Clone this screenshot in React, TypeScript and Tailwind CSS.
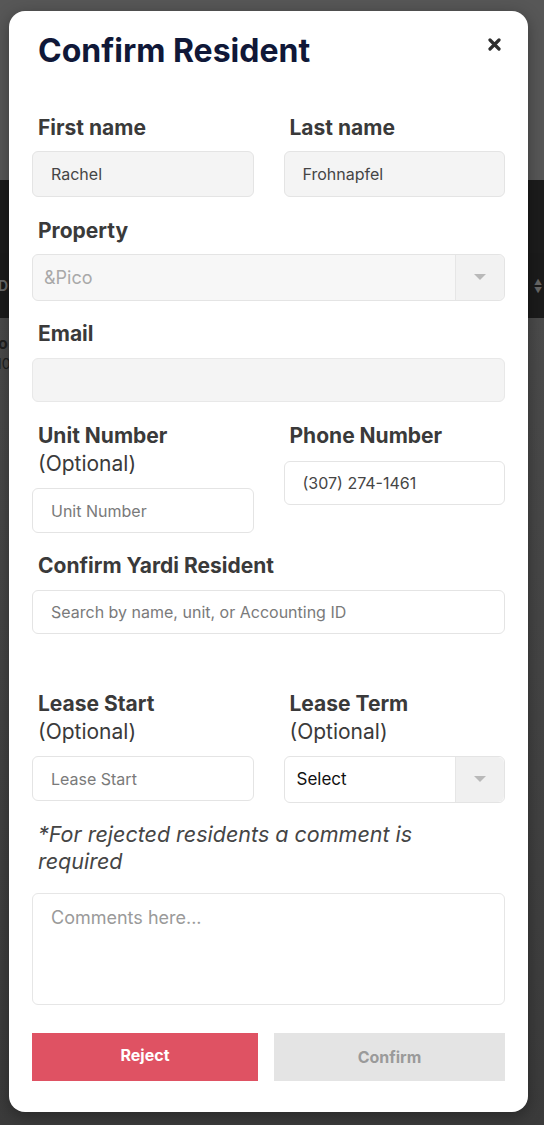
import React from "react";

const font = { fontFamily: "Inter, Lato, 'Noto Sans', sans-serif" };

function Caret() {
  return (
    <svg width="12" height="7" viewBox="0 0 12 7">
      <path d="M0 0 L12 0 L6 6 Z" fill="#b9b9b9" />
    </svg>
  );
}

function Label({ children }: { children: React.ReactNode }) {
  return (
    <div className="pl-[6px] text-[21px] leading-[28px] font-bold text-[#3a3a3a]">{children}</div>
  );
}

export default function App() {
  return (
    <div className="relative w-[544px] h-[1125px] overflow-hidden" style={font}>
      {/* page behind the overlay */}
      <div className="flex flex-col h-full">
        <div className="h-[180px] bg-[#575757]" />
        <div className="h-[73px] bg-[#1c1c1c]" />
        <div className="h-[65px] bg-[#1b1b1b] flex items-center justify-between pl-0 pr-[2px]">
          <span className="text-[14px] font-bold text-[#6a6a6a] -ml-[2px]">D</span>
          <span className="flex flex-col text-[8px] leading-[8px] text-[#666]">
            <span>▲</span>
            <span>▼</span>
          </span>
        </div>
        <div className="flex-1 bg-gradient-to-b from-[#4b4b4b] to-[#3b3b3b] pt-[14px]">
          <div className="text-[16px] leading-[22px] font-bold text-[#1e1e1e] -ml-[2px]">o</div>
          <div className="text-[14px] leading-[20px] text-[#1e1e1e] -ml-[4px]">10</div>
        </div>
      </div>

      {/* modal */}
      <div className="absolute left-[9px] top-[11px] w-[519px] h-[1101px] bg-white rounded-[16px] shadow-[0_4px_16px_rgba(0,0,0,0.35)] px-[23px] pt-[21px]">
        <div className="relative">
          <h1 className="pl-[6px] text-[32px] leading-[38px] font-bold text-[#101838]">Confirm Resident</h1>
          <button className="absolute right-[4px] top-[5px] w-[14px] h-[14px] flex items-center justify-center">
            <svg width="13" height="13" viewBox="0 0 13 13">
              <path d="M2 2 L11 11 M11 2 L2 11" stroke="#2e2e2e" strokeWidth="3.2" strokeLinecap="round" />
            </svg>
          </button>
        </div>

        {/* names */}
        <div className="grid grid-cols-2 gap-x-[30px] mt-[44px]">
          <div className="flex flex-col gap-[9px]">
            <Label>First name</Label>
            <div className="h-[46px] rounded-[6px] border border-[#e4e4e4] bg-[#f4f4f4] flex items-center pl-[18px] text-[16px] text-[#454545]">Rachel</div>
          </div>
          <div className="flex flex-col gap-[9px]">
            <Label>Last name</Label>
            <div className="h-[46px] rounded-[6px] border border-[#e4e4e4] bg-[#f4f4f4] flex items-center pl-[18px] text-[16px] text-[#454545]">Frohnapfel</div>
          </div>
        </div>

        {/* property */}
        <div className="flex flex-col gap-[9px] mt-[20px]">
          <Label>Property</Label>
          <div className="h-[47px] rounded-[6px] border border-[#e4e4e4] bg-[#f7f7f7] flex">
            <div className="flex-1 flex items-center pl-[11px] text-[18px] text-[#a9a9a9]">&amp;Pico</div>
            <div className="w-[49px] border-l border-[#e6e6e6] bg-[#f2f2f2] rounded-r-[6px] flex items-center justify-center">
              <Caret />
            </div>
          </div>
        </div>

        {/* email */}
        <div className="flex flex-col gap-[10px] mt-[19px]">
          <Label>Email</Label>
          <div className="h-[44px] rounded-[6px] border border-[#e8e8e8] bg-[#f4f4f4]" />
        </div>

        {/* unit / phone */}
        <div className="grid grid-cols-2 gap-x-[30px] mt-[20px] items-start">
          <div className="flex flex-col gap-[10px]">
            <Label>
              Unit Number
              <br />
              <span className="font-normal">(Optional)</span>
            </Label>
            <div className="h-[45px] rounded-[6px] border border-[#e4e4e4] bg-white flex items-center pl-[18px] text-[16px] text-[#7a7a7a]">Unit Number</div>
          </div>
          <div className="flex flex-col gap-[11px]">
            <Label>Phone Number</Label>
            <div className="h-[44px] rounded-[6px] border border-[#e4e4e4] bg-white flex items-center pl-[18px] text-[16px] text-[#454545]">(307) 274-1461</div>
          </div>
        </div>

        {/* yardi */}
        <div className="flex flex-col gap-[10px] mt-[19px]">
          <Label>Confirm Yardi Resident</Label>
          <div className="h-[44px] rounded-[6px] border border-[#e4e4e4] bg-white flex items-center pl-[18px] text-[16px] text-[#7a7a7a]">Search by name, unit, or Accounting ID</div>
        </div>

        {/* lease */}
        <div className="grid grid-cols-2 gap-x-[30px] mt-[56px] items-start">
          <div className="flex flex-col gap-[10px]">
            <Label>
              Lease Start
              <br />
              <span className="font-normal">(Optional)</span>
            </Label>
            <div className="h-[45px] rounded-[6px] border border-[#e4e4e4] bg-white flex items-center pl-[18px] text-[16px] text-[#7a7a7a]">Lease Start</div>
          </div>
          <div className="flex flex-col gap-[10px]">
            <Label>
              Lease Term
              <br />
              <span className="font-normal">(Optional)</span>
            </Label>
            <div className="h-[47px] rounded-[6px] border border-[#e4e4e4] bg-white flex">
              <div className="flex-1 flex items-center pl-[12px] text-[17px] text-[#111]">Select</div>
              <div className="w-[49px] border-l border-[#e6e6e6] bg-[#f0f0f0] rounded-r-[6px] flex items-center justify-center">
                <Caret />
              </div>
            </div>
          </div>
        </div>

        {/* note */}
        <p className="mt-[18px] pl-[6px] pr-[60px] text-[21.5px] leading-[27px] italic text-[#454545]">
          *For rejected residents a comment is required
        </p>

        <div className="mt-[18px] h-[112px] rounded-[6px] border border-[#e6e6e6] bg-white pl-[18px] pt-[10px] text-[18px] text-[#9a9a9a]">
          Comments here...
        </div>

        {/* buttons */}
        <div className="flex justify-between mt-[28px]">
          <button className="w-[226px] h-[48px] bg-[#df5263] text-white text-[16px] font-bold flex items-center justify-center pb-[4px]">Reject</button>
          <button className="w-[231px] h-[48px] bg-[#e4e4e4] text-[#9a9a9a] text-[16px] font-bold flex items-center justify-center">Confirm</button>
        </div>
      </div>
    </div>
  );
}
